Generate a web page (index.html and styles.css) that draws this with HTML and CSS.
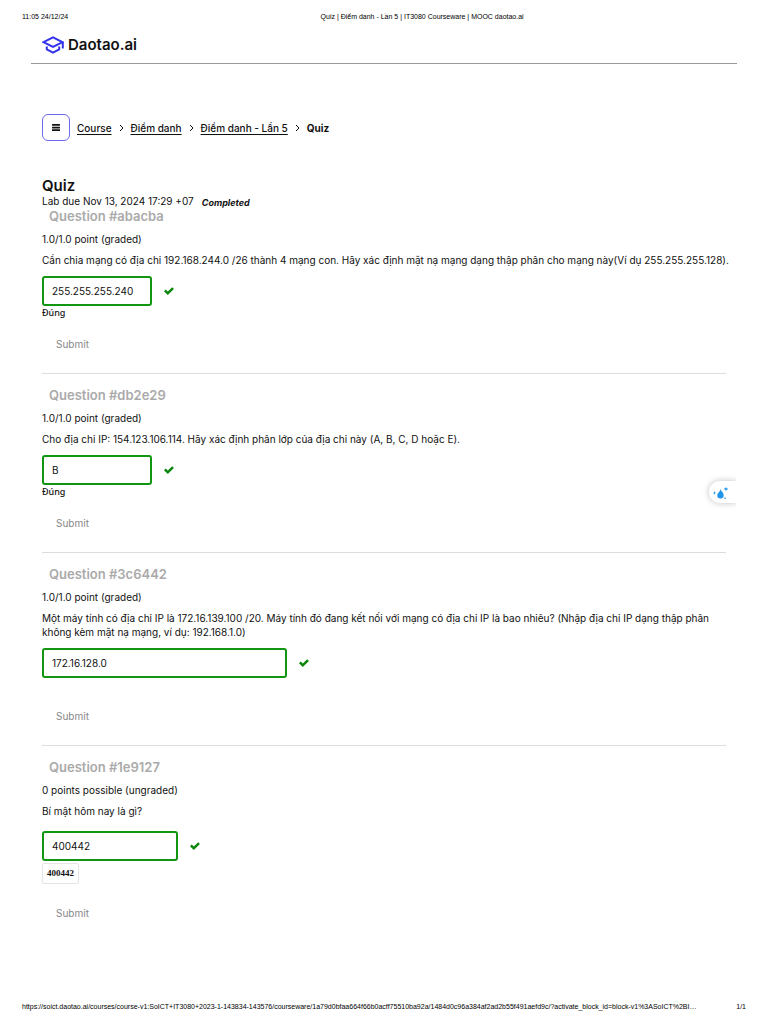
FILE: index.html
```html
<!DOCTYPE html>
<html lang="vi">
<head>
    <meta charset="UTF-8">
    <meta name="viewport" content="width=device-width, initial-scale=1.0">
    <title>Quiz | Điểm danh - Lần 5 | IT3080 Courseware | MOOC daotao.ai</title>
    <link rel="stylesheet" href="styles.css">
</head>
<body>
    <div class="print-header">
        <span class="print-date">11:05 24/12/24</span>
        <span class="print-title">Quiz | Điểm danh - Lần 5 | IT3080 Courseware | MOOC daotao.ai</span>
    </div>

    <header class="site-header">
        <a class="logo" href="#">
            <svg class="logo-icon" viewBox="0 0 22 18" fill="none" stroke="#3333ee" stroke-width="2" aria-hidden="true">
                <path d="M1.500 6.200 11 1.400l9.500 4.800L11 11z"/>
                <path d="M20.800 6.200v6.300"/>
                <path d="M4.800 10.500v3L11 16.700l6.200-3.200v-3"/>
            </svg>
            <span>Daotao.ai</span>
        </a>
    </header>

    <main class="content">
        <nav class="breadcrumbs">
            <button class="menu-button" type="button" aria-label="Menu">
                <svg viewBox="0 0 9 8" width="8" height="7" fill="#111"><path d="M0 0h9v2H0zM0 3h9v2H0zM0 6h9v2H0z"/></svg>
            </button>
            <a href="#">Course</a>
            <svg class="chevron" viewBox="0 0 5 8"><path d="M1 1l3 3-3 3"/></svg>
            <a href="#">Điểm danh</a>
            <svg class="chevron" viewBox="0 0 5 8"><path d="M1 1l3 3-3 3"/></svg>
            <a href="#">Điểm danh - Lần 5</a>
            <svg class="chevron" viewBox="0 0 5 8"><path d="M1 1l3 3-3 3"/></svg>
            <span class="current">Quiz</span>
        </nav>

        <h1 class="unit-title">Quiz</h1>
        <div class="unit-meta">
            <span>Lab due Nov 13, 2024 17:29 +07</span>
            <em class="status">Completed</em>
        </div>

        <section class="problem">
            <h2 class="problem-title">Question #abacba</h2>
            <p class="score">1.0/1.0 point (graded)</p>
            <label class="prompt" for="q1">Cần chia mạng có địa chỉ 192.168.244.0 /26 thành 4 mạng con. Hãy xác định mặt nạ mạng dạng thập phân cho mạng này(Ví dụ 255.255.255.128).</label>
            <div class="answer">
                <input class="answer-input short" id="q1" type="text" value="255.255.255.240">
                <svg class="check" viewBox="0 0 10 8"><path d="M0 4.300 1.700 2.600 3.800 4.600 8.200.3 9.900 2 3.800 7.900z"/></svg>
            </div>
            <p class="message">Đúng</p>
            <button class="submit" type="button">Submit</button>
        </section>

        <section class="problem">
            <h2 class="problem-title">Question #db2e29</h2>
            <p class="score">1.0/1.0 point (graded)</p>
            <label class="prompt" for="q2">Cho địa chỉ IP: 154.123.106.114. Hãy xác định phân lớp của địa chỉ này (A, B, C, D hoặc E).</label>
            <div class="answer">
                <input class="answer-input short" id="q2" type="text" value="B">
                <svg class="check" viewBox="0 0 10 8"><path d="M0 4.300 1.700 2.600 3.800 4.600 8.200.3 9.900 2 3.800 7.900z"/></svg>
            </div>
            <p class="message">Đúng</p>
            <button class="submit" type="button">Submit</button>
        </section>

        <section class="problem">
            <h2 class="problem-title">Question #3c6442</h2>
            <p class="score">1.0/1.0 point (graded)</p>
            <label class="prompt" for="q3">Một máy tính có địa chỉ IP là 172.16.139.100 /20. Máy tính đó đang kết nối với mạng có địa chỉ IP là bao nhiêu? (Nhập địa chỉ IP dạng thập phân không kèm mặt nạ mạng, ví dụ: 192.168.1.0)</label>
            <div class="answer">
                <input class="answer-input long" id="q3" type="text" value="172.16.128.0">
                <svg class="check" viewBox="0 0 10 8"><path d="M0 4.300 1.700 2.600 3.800 4.600 8.200.3 9.900 2 3.800 7.900z"/></svg>
            </div>
            <p class="message"></p>
            <button class="submit" type="button">Submit</button>
        </section>

        <section class="problem formula">
            <h2 class="problem-title">Question #1e9127</h2>
            <p class="score">0 points possible (ungraded)</p>
            <label class="prompt" for="q4">Bí mật hôm nay là gì?</label>
            <div class="answer">
                <input class="answer-input medium" id="q4" type="text" value="400442">
                <svg class="check" viewBox="0 0 10 8"><path d="M0 4.300 1.700 2.600 3.800 4.600 8.200.3 9.900 2 3.800 7.900z"/></svg>
            </div>
            <output class="preview" for="q4">400442</output>
            <button class="submit" type="button">Submit</button>
        </section>
    </main>

    <div class="widget-clip">
        <button class="widget" type="button" aria-label="Assistant">
            <svg viewBox="0 0 16 14" width="16" height="14" fill="#2196e8">
                <path d="M7.500 2c.3 2 3.200 3.500 3.200 6.200a3.200 3.200 0 0 1-6.400 0C4.300 6 7 5 7.500 2z"/>
                <path d="M13 0l.7 1.300L15.500 2l-1.800.7L13 4l-.7-1.300L10.500 2l1.800-.7zM1.500 4l.5 1.500L3 6l-1 .5L1.500 8 1 6.500 0 6l1-.5zM12 10l.4.800.8.400-.8.400-.4.800-.4-.8-.8-.4.8-.4z"/>
            </svg>
        </button>
    </div>

    <div class="print-footer">
        <span class="print-url">https://soict.daotao.ai/courses/course-v1:SoICT+IT3080+2023-1-143834-143576/courseware/1a79d0bfaa664f66b0acff75510ba92a/1484d0c96a384af2ad2b55f491aefd9c/?activate_block_id=block-v1%3ASoICT%2BI…</span>
        <span>1/1</span>
    </div>
</body>
</html>
```
FILE: styles.css
```css
* {
    box-sizing: border-box;
}
body {
    margin: 0;
    min-height: 100vh;
    display: flex;
    flex-direction: column;
    background-color: #fff;
    color: #111;
    font-family: Inter, "Open Sans", sans-serif;
    font-size: 10px;
    line-height: 14px;
}
h1, h2, p {
    margin: 0;
}
button, input {
    font-family: inherit;
    font-size: inherit;
}

/* Page margins of the printout */
.print-header,
.print-footer {
    display: flex;
    justify-content: space-between;
    padding: 0 22px;
    font-family: "Liberation Sans", Arial, sans-serif;
    font-size: 7px;
    line-height: 10px;
    color: #000;
    white-space: nowrap;
}
.print-header {
    padding-top: 12px;
}
.print-title {
    flex: 1;
    padding-left: 30px;
    text-align: center;
}
.print-footer {
    padding-bottom: 12px;
}

.site-header {
    margin: 0 31px;
    padding: 13px 11px 9px;
    border-bottom: 1px solid #999;
}
.logo {
    display: flex;
    align-items: center;
    gap: 4px;
    width: fit-content;
    color: #111;
    font-size: 15px;
    font-weight: 600;
    line-height: 19px;
    text-decoration: none;
}
.logo-icon {
    width: 22px;
    height: 18px;
}

.content {
    flex: 1;
    padding: 50px 42px 0;
}

.breadcrumbs {
    display: flex;
    align-items: center;
    gap: 7px;
    font-weight: 500;
}
.breadcrumbs a {
    color: #111;
    text-underline-offset: 2px;
}
.breadcrumbs .current {
    font-weight: 700;
}
.menu-button {
    display: flex;
    align-items: center;
    justify-content: center;
    width: 28px;
    height: 27px;
    padding: 0;
    background: #fff;
    border: 1px solid #6b6bf0;
    border-radius: 6px;
}
.chevron {
    width: 5px;
    height: 8px;
    fill: none;
    stroke: #111;
}

.unit-title {
    margin-top: 36px;
    font-size: 15px;
    font-weight: 600;
    line-height: 18px;
}
.unit-meta {
    display: flex;
    gap: 8px;
    line-height: 13px;
}
.status {
    padding-top: 3px;
    font-size: 9px;
    font-weight: 700;
    line-height: 10px;
}

.problem {
    padding-bottom: 14px;
}
.problem + .problem {
    padding-top: 13px;
    border-top: 1px solid #ddd;
}
.problem-title {
    padding-left: 7px;
    margin-bottom: 8px;
    color: #aaa;
    font-size: 13px;
    font-weight: 600;
    line-height: 16px;
}
.score {
    margin-bottom: 7px;
}
.prompt {
    display: block;
    margin: 0 -10px 9px 0;
}
.answer {
    display: flex;
    align-items: center;
    gap: 12px;
}
.answer-input {
    height: 30px;
    padding: 0 8px;
    background: #fff;
    border: 2px solid #129612;
    border-radius: 3px;
    color: #111;
}
.answer-input.short {
    width: 110px;
}
.answer-input.medium {
    width: 136px;
}
.answer-input.long {
    width: 245px;
}
.check {
    width: 10px;
    height: 8px;
    fill: #0a870a;
}
.message {
    min-height: 14px;
    margin-bottom: 9px;
    font-family: "Noto Sans", sans-serif;
    font-size: 9px;
    font-weight: 500;
}
.submit {
    display: block;
    height: 30px;
    padding: 0 14px;
    background: none;
    border: none;
    color: #888;
}

.formula .prompt {
    margin-bottom: 13px;
}
.preview {
    display: block;
    width: fit-content;
    margin: 2px 0 14px;
    padding: 3px 4px;
    border: 1px solid #e5e5e5;
    border-radius: 2px;
    font-family: "Liberation Serif", serif;
    font-size: 9px;
    font-weight: 700;
    line-height: 13px;
}

/* Floating assistant tab, cut off at the right page margin */
.widget-clip {
    position: fixed;
    top: 474px;
    right: 32px;
    padding: 7px 0 7px 7px;
    overflow: hidden;
}
.widget {
    display: block;
    width: 27px;
    height: 22px;
    padding: 3px 0 0 4px;
    background: #fff;
    border: none;
    border-radius: 11px 0 0 11px;
    box-shadow: 0 0 6px rgba(0, 0, 0, 0.25);
    line-height: 0;
    text-align: left;
}
```
